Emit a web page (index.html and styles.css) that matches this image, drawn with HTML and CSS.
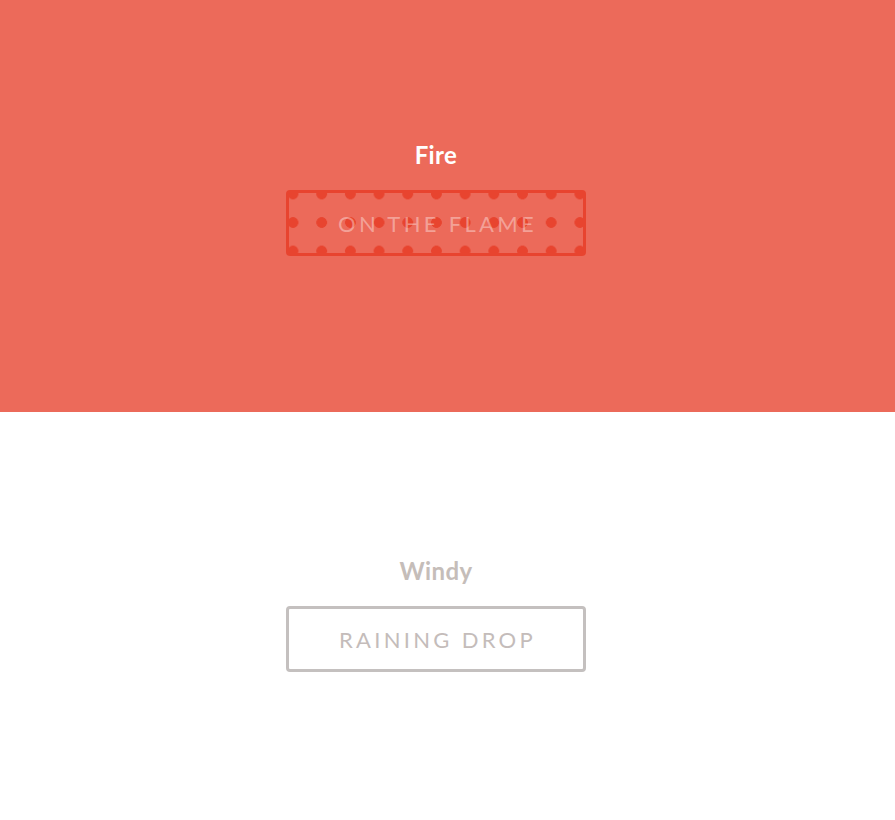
FILE: index.html
```html
<!DOCTYPE html>
<html lang="en">
<head>
    <meta charset="UTF-8">
    <meta name="viewport" content="width=device-width, initial-scale=1.0">
    <title>Buttons</title>
    <link rel="stylesheet" href="styles.css">
</head>
<body>

    <section class="panel panel-fire">
        <h2 class="panel-title">Fire</h2>
        <button class="btn btn-flame">On the flame</button>
    </section>

    <section class="panel panel-windy">
        <h2 class="panel-title">Windy</h2>
        <button class="btn btn-drop">Raining drop</button>
    </section>

</body>
</html>
```

FILE: styles.css
```css
body {
    font-family: Lato, "Open Sans", sans-serif;
    margin: 0;
    padding: 0;
    text-align: center;
}

.panel {
    height: 412px;
    box-sizing: border-box;
    display: flex;
    flex-direction: column;
    align-items: center;
    padding-right: 23px;
}

.panel-fire {
    background-color: #ec6a5a;
    padding-top: 140px;
}

.panel-windy {
    background-color: #ffffff;
    height: 408px;
    padding-top: 144px;
}

.panel-title {
    margin: 0 0 21px;
    font-size: 24px;
    line-height: 29px;
    font-weight: 700;
    letter-spacing: 0.4px;
}

.panel-fire .panel-title {
    color: #ffffff;
}

.panel-windy .panel-title {
    color: #c5bdb9;
}

.btn {
    width: 300px;
    height: 66px;
    border-radius: 4px;
    background-color: transparent;
    font-family: Lato, sans-serif;
    font-size: 22px;
    font-weight: 400;
    letter-spacing: 3.3px;
    text-transform: uppercase;
    padding: 0 0 0 3px;
    cursor: pointer;
}

/* dotted fill that sits behind the label */
.btn-flame {
    border: 3px solid #e8442f;
    color: rgba(255, 255, 255, 0.38);
    background-image: radial-gradient(circle, #e8442f 5px, transparent 5.6px);
    background-size: 28.7px 28.5px;
    background-position: -10.35px -13.25px;
}

.btn-drop {
    border: 3px solid #c4c0bf;
    color: #c4bcba;
}
```
